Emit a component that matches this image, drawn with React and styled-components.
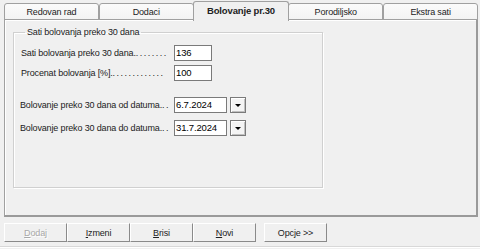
import React from "react";
import styled, { createGlobalStyle } from "styled-components";

const Global = createGlobalStyle`
  body {
    margin: 0;
    background: #f0f0f0;
    font-family: "Liberation Sans", Arial, sans-serif;
  }
`;

const Main = styled.div`
  width: 480px;
  height: 249px;
  box-sizing: border-box;
  padding: 1px 2px 0 4px;
  background: #f0f0f0;
  font-family: "Liberation Sans", Arial, sans-serif;
  font-size: 9px;
  letter-spacing: -0.15px;
  color: #000;
  position: relative;
`;

const TabBar = styled.div`
  display: flex;
  align-items: flex-end;
  height: 19px;
  position: relative;
  z-index: 2;
`;

const Tab = styled.div`
  box-sizing: border-box;
  width: ${(p) => (p.$active ? "97px" : "95px")};
  margin: ${(p) => (p.$active ? "0 -1px -1px" : "0")};
  height: ${(p) => (p.$active ? "20px" : "17px")};
  border: 1px solid #a0a0a0;
  border-bottom: ${(p) => (p.$active ? "none" : "1px solid #a0a0a0")};
  border-radius: 3px 3px 0 0;
  background: ${(p) => (p.$active ? "#f0f0f0" : "linear-gradient(#fbfbfb, #f3f3f3)")};
  display: flex;
  align-items: center;
  justify-content: center;
  padding-bottom: ${(p) => (p.$active ? "2px" : "0")};
  font-weight: ${(p) => (p.$active ? "bold" : "normal")};
  font-size: ${(p) => (p.$active ? "9.5px" : "9px")};
  color: #222;
  & + & {
    border-left: ${(p) => (p.$active ? "1px solid #a0a0a0" : "none")};
  }
`;

const Panel = styled.div`
  box-sizing: border-box;
  height: 198px;
  margin-top: -1px;
  border-top: 1px solid #a0a0a0;
  border-left: 1px solid #a0a0a0;
  border-right: 2px solid #9a9a9a;
  border-bottom: 2px solid #9a9a9a;
  box-shadow: inset 1px 1px 0 #ffffff;
  padding: 7px 0 0 8px;
`;

const Group = styled.fieldset`
  box-sizing: border-box;
  width: 310px;
  height: 161px;
  margin: 0;
  padding: 7px 0 0 7px;
  border: 1px solid #d0d0d0;
  box-shadow: 1px 1px 0 #ffffff, inset 1px 1px 0 #ffffff;
  legend {
    padding: 0 2px;
    margin-left: 4px;
    line-height: 11px;
    color: #222;
  }
`;

const Row = styled.div`
  display: flex;
  align-items: center;
  height: 16px;
  margin-bottom: ${(p) => p.$gap || "4px"};
  margin-left: ${(p) => p.$shift || "0"};
`;

const Label = styled.div`
  display: flex;
  width: ${(p) => p.$w || "153px"};
  flex: none;
  white-space: nowrap;
  overflow: hidden;
  color: #222;
`;

const Dots = styled.span`
  letter-spacing: -0.5px;
`;

const Field = styled.div`
  box-sizing: border-box;
  width: ${(p) => p.$w || "38px"};
  height: 16px;
  border: 1px solid #7a7a7a;
  background: #fff;
  padding: 0 1px;
  line-height: 13px;
  font-size: 9.5px;
  color: #000;
`;

const DropButton = styled.div`
  box-sizing: border-box;
  width: 16px;
  height: 16px;
  margin-left: 3px;
  border: 1px solid #7a7a7a;
  background: #f4f4f4;
  box-shadow: inset 1px 1px 0 #fff, inset -1px -1px 0 #c0c0c0;
  display: flex;
  align-items: center;
  justify-content: center;
  &::after {
    content: "";
    border-left: 3px solid transparent;
    border-right: 3px solid transparent;
    border-top: 3px solid #000;
  }
`;

const ButtonBar = styled.div`
  display: flex;
  margin-top: 6px;
`;

const Button = styled.div`
  box-sizing: border-box;
  width: ${(p) => p.$w || "63px"};
  height: 19px;
  margin-left: ${(p) => p.$ml || "0"};
  border-top: 1px solid #fff;
  border-left: 1px solid #fff;
  border-right: 1px solid #8a8a8a;
  border-bottom: 1px solid #8a8a8a;
  display: flex;
  align-items: center;
  justify-content: center;
  color: ${(p) => (p.$disabled ? "#a8a8a8" : "#222")};
  text-shadow: ${(p) => (p.$disabled ? "1px 1px 0 #fff" : "none")};
`;

const BottomLine = styled.div`
  position: absolute;
  left: 0;
  right: 0;
  top: 246px;
  border-top: 1px solid #d8d8d8;
  border-bottom: 1px solid #fff;
`;

const tabs = ["Redovan rad", "Dodaci", "Bolovanje pr.30", "Porodiljsko", "Ekstra sati"];

function Lead({ text, n, w }) {
  return (
    <Label $w={w}>
      <span>{text}</span>
      <Dots>{" .".repeat(n)}</Dots>
    </Label>
  );
}

export default function App() {
  return (
    <Main>
      <Global />
      <TabBar>
        {tabs.map((t, i) => (
          <Tab key={t} $active={i === 2}>{t}</Tab>
        ))}
      </TabBar>
      <Panel>
        <Group>
          <legend>Sati bolovanja preko 30 dana</legend>
          <Row>
            <Lead text="Sati bolovanja preko 30 dana." n={8} />
            <Field>136</Field>
          </Row>
          <Row $gap="16px">
            <Lead text="Procenat bolovanja [%]." n={13} />
            <Field>100</Field>
          </Row>
          <Row $shift="-1px" $gap="7px">
            <Lead w="154px" text="Bolovanje preko 30 dana od datuma." n={2} />
            <Field $w="53px">6.7.2024</Field>
            <DropButton />
          </Row>
          <Row $shift="-1px">
            <Lead w="154px" text="Bolovanje preko 30 dana do datuma." n={2} />
            <Field $w="53px">31.7.2024</Field>
            <DropButton />
          </Row>
        </Group>
      </Panel>
      <ButtonBar>
        <Button $disabled><span><u>D</u>odaj</span></Button>
        <Button><span><u>I</u>zmeni</span></Button>
        <Button><span><u>B</u>risi</span></Button>
        <Button><span><u>N</u>ovi</span></Button>
        <Button $ml="8px">Opcje &gt;&gt;</Button>
      </ButtonBar>
      <BottomLine />
    </Main>
  );
}
